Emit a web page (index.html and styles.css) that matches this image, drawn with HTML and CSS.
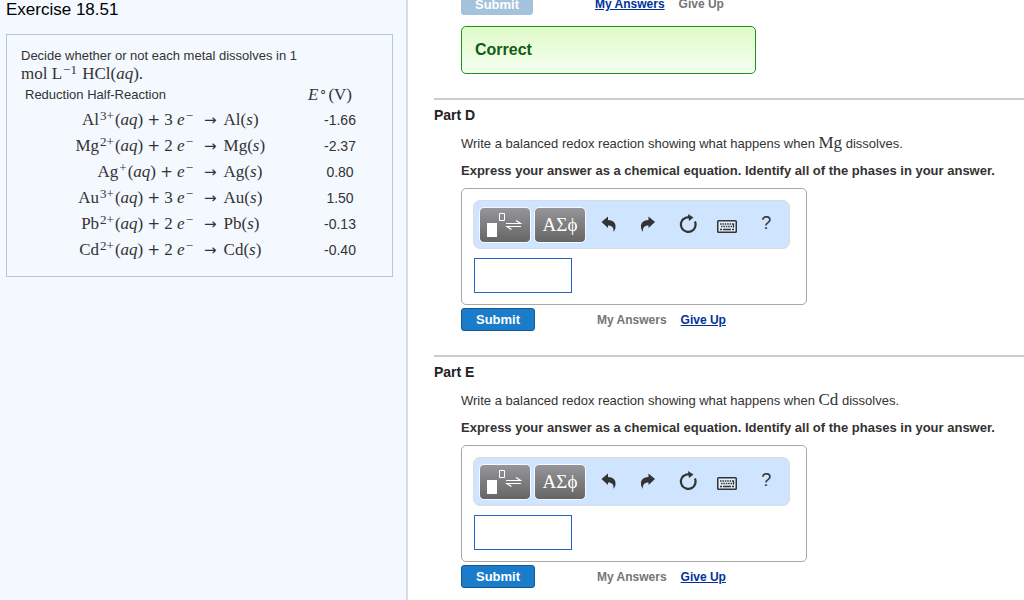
FILE: index.html
```html
<!DOCTYPE html>
<html lang="en">
<head>
    <meta charset="UTF-8">
    <meta name="viewport" content="width=device-width, initial-scale=1.0">
    <title>Exercise 18.51</title>
    <link rel="stylesheet" href="styles.css">
</head>
<body>
    <!-- shared toolbar icons -->
    <svg class="sprite" aria-hidden="true">
        <symbol id="icon-template" viewBox="0 0 50 34">
            <path d="M7 15h10v14H7z" fill="#fff"/>
            <path d="M19.500 5.500h5v7h-5z" fill="none" stroke="#fff"/>
            <path d="M26 15.500h14.500l-4.500-3M41 18.500H27l4.500 3" fill="none" stroke="#fff" stroke-width="1.200"/>
        </symbol>
        <symbol id="icon-undo" viewBox="0 0 16 16">
            <path d="M0.500 6L7 0.500V4c5 0 8 3 7.500 7 0 2-1 3.500-2 5 0.500-4-1-6.500-5.500-6.500V12z"/>
        </symbol>
        <symbol id="icon-redo" viewBox="0 0 16 16">
            <path d="M15 6L8.500 0.500V4c-5 0-8 3-7.500 7 0 2 1 3.500 2 5-0.500-4 1-6.500 5.500-6.500V12z"/>
        </symbol>
        <symbol id="icon-reset" viewBox="0 0 20 20">
            <path d="M5.500 4.800A7.400 7.400 0 1 0 17 7.500" fill="none" stroke="#333" stroke-width="2.200"/>
            <path d="M5 5.500C7 3.500 9 3.200 11 3.200" fill="none" stroke="#333" stroke-width="2.200"/>
            <path d="M10 0l5.500 3.500L11 7z"/>
        </symbol>
        <symbol id="icon-keyboard" viewBox="0 0 20 13">
            <rect x="0.750" y="0.750" width="18.500" height="11.500" rx="0.800" fill="#e4f0ff" stroke="#333" stroke-width="1.500"/>
            <path d="M3 4h14M4 6.500h13" fill="none" stroke="#333" stroke-width="1.400" stroke-dasharray="1.500 0.900"/>
            <path d="M3 9.500h2M6 9.500h8M15 9.500h2M16.500 3.500v4" fill="none" stroke="#333" stroke-width="1.300"/>
        </symbol>
    </svg>

    <div class="page">
        <aside class="sidebar">
            <h1>Exercise 18.51</h1>
            <section class="problem">
                <p>Decide whether or not each metal dissolves in 1<br>
                <span class="math">mol L<sup>−1</sup> HCl(<i>aq</i>).</span></p>
                <table>
                    <thead>
                        <tr>
                            <th colspan="2" scope="col">Reduction Half-Reaction</th>
                            <th class="potential math" scope="col"><i>E</i><sup>∘</sup>(V)</th>
                        </tr>
                    </thead>
                    <tbody>
                        <tr>
                            <td class="ion math">Al<sup>3+</sup>(<i>aq</i>) <span class="op">+</span> 3 <i>e</i><sup>−</sup></td>
                            <td class="metal math"><span class="arrow">→</span>Al(<i>s</i>)</td>
                            <td class="value">-1.66</td>
                        </tr>
                        <tr>
                            <td class="ion math">Mg<sup>2+</sup>(<i>aq</i>) <span class="op">+</span> 2 <i>e</i><sup>−</sup></td>
                            <td class="metal math"><span class="arrow">→</span>Mg(<i>s</i>)</td>
                            <td class="value">-2.37</td>
                        </tr>
                        <tr>
                            <td class="ion math">Ag<sup>+</sup>(<i>aq</i>) <span class="op">+</span> <i>e</i><sup>−</sup></td>
                            <td class="metal math"><span class="arrow">→</span>Ag(<i>s</i>)</td>
                            <td class="value">0.80</td>
                        </tr>
                        <tr>
                            <td class="ion math">Au<sup>3+</sup>(<i>aq</i>) <span class="op">+</span> 3 <i>e</i><sup>−</sup></td>
                            <td class="metal math"><span class="arrow">→</span>Au(<i>s</i>)</td>
                            <td class="value">1.50</td>
                        </tr>
                        <tr>
                            <td class="ion math">Pb<sup>2+</sup>(<i>aq</i>) <span class="op">+</span> 2 <i>e</i><sup>−</sup></td>
                            <td class="metal math"><span class="arrow">→</span>Pb(<i>s</i>)</td>
                            <td class="value">-0.13</td>
                        </tr>
                        <tr>
                            <td class="ion math">Cd<sup>2+</sup>(<i>aq</i>) <span class="op">+</span> 2 <i>e</i><sup>−</sup></td>
                            <td class="metal math"><span class="arrow">→</span>Cd(<i>s</i>)</td>
                            <td class="value">-0.40</td>
                        </tr>
                    </tbody>
                </table>
            </section>
        </aside>

        <main>
            <section class="part part-done">
                <div class="actions">
                    <button class="submit" type="button" disabled>Submit</button>
                    <a href="#answers">My Answers</a>
                    <span>Give Up</span>
                </div>
                <div class="feedback">Correct</div>
            </section>

            <section class="part">
                <h2>Part D</h2>
                <div class="part-body">
                    <p>Write a balanced redox reaction showing what happens when <span class="math">Mg</span> dissolves.</p>
                    <p class="instructions">Express your answer as a chemical equation. Identify all of the phases in your answer.</p>
                    <div class="editor">
                        <div class="toolbar">
                            <button class="tool-dark" type="button" aria-label="Templates"><svg width="50" height="34"><use href="#icon-template"/></svg></button>
                            <button class="tool-dark" type="button">ΑΣϕ</button>
                            <button class="tool" type="button" aria-label="Undo"><svg width="16" height="16"><use href="#icon-undo"/></svg></button>
                            <button class="tool" type="button" aria-label="Redo"><svg width="16" height="16"><use href="#icon-redo"/></svg></button>
                            <button class="tool" type="button" aria-label="Reset"><svg width="20" height="20"><use href="#icon-reset"/></svg></button>
                            <button class="tool tool-keyboard" type="button" aria-label="Keyboard"><svg width="20" height="13"><use href="#icon-keyboard"/></svg></button>
                            <button class="tool" type="button">?</button>
                        </div>
                        <input type="text" aria-label="Part D answer">
                    </div>
                    <div class="actions">
                        <button class="submit" type="button">Submit</button>
                        <span>My Answers</span>
                        <a href="#giveup">Give Up</a>
                    </div>
                </div>
            </section>

            <section class="part">
                <h2>Part E</h2>
                <div class="part-body">
                    <p>Write a balanced redox reaction showing what happens when <span class="math">Cd</span> dissolves.</p>
                    <p class="instructions">Express your answer as a chemical equation. Identify all of the phases in your answer.</p>
                    <div class="editor">
                        <div class="toolbar">
                            <button class="tool-dark" type="button" aria-label="Templates"><svg width="50" height="34"><use href="#icon-template"/></svg></button>
                            <button class="tool-dark" type="button">ΑΣϕ</button>
                            <button class="tool" type="button" aria-label="Undo"><svg width="16" height="16"><use href="#icon-undo"/></svg></button>
                            <button class="tool" type="button" aria-label="Redo"><svg width="16" height="16"><use href="#icon-redo"/></svg></button>
                            <button class="tool" type="button" aria-label="Reset"><svg width="20" height="20"><use href="#icon-reset"/></svg></button>
                            <button class="tool tool-keyboard" type="button" aria-label="Keyboard"><svg width="20" height="13"><use href="#icon-keyboard"/></svg></button>
                            <button class="tool" type="button">?</button>
                        </div>
                        <input type="text" aria-label="Part E answer">
                    </div>
                    <div class="actions">
                        <button class="submit" type="button">Submit</button>
                        <span>My Answers</span>
                        <a href="#giveup">Give Up</a>
                    </div>
                </div>
            </section>
        </main>
    </div>
</body>
</html>
```
FILE: styles.css
```css
*,
*::after,
*::before{
    box-sizing: border-box;
}

body{
    margin: 0;
    font-family: "Liberation Sans", Arial, sans-serif;
    font-size: 13px;
    line-height: 18px;
    color: #333;
    background-color: #fff;
}

h1, h2, p{
    margin: 0;
}

button, input{
    font-family: inherit;
}

.sprite{
    display: none;
}

.page{
    display: flex;
    min-height: 100vh;
}

/* left column */
.sidebar{
    flex: 0 0 408px;
    padding: 0 13px 0 6px;
    border-right: 2px solid #d3e0ea;
    background-color: #f4f8ff;
}
.sidebar h1{
    font-size: 17px;
    line-height: 20px;
    font-weight: normal;
    color: #000;
}

.problem{
    margin-top: 14px;
    padding: 12px 14px 13px;
    border: 1px solid #b0c8da;
}

.math{
    font-family: "Liberation Serif", "Times New Roman", serif;
    font-size: 17px;
    line-height: 18px;
}
.math sup{
    margin: 0 1px;
    font-size: 13px;
    line-height: 0;
    vertical-align: 5px;
}
.op,
.arrow{
    font-family: "DejaVu Sans", sans-serif;
    font-size: 15px;
    line-height: 0;
}
.arrow{
    margin-right: 7px;
}

table{
    width: 100%;
    border-collapse: collapse;
}
th, td{
    height: 26px;
    padding: 0;
    white-space: nowrap;
}
th{
    height: 23px;
    padding: 0 0 2px 4px;
    font-weight: normal;
    text-align: left;
}
.potential{
    padding: 0 26px 2px 0;
    text-align: right;
}
.ion{
    width: 173px;
    text-align: right;
}
.metal{
    width: 80px;
    padding-left: 10px;
}
.value{
    padding-left: 28px;
    font-size: 14px;
    text-align: center;
}

/* right column */
main{
    flex: 1;
    min-width: 0;
    padding-left: 26px;
    overflow: hidden;
}

.part{
    padding: 5px 0 24px;
    border-top: 2px solid #ccc;
}
.part h2{
    font-size: 14px;
    line-height: 20px;
    color: #222;
}
.part-done{
    margin-top: -7px;
    padding: 0 0 24px 27px;
    border-top: 0;
}
.part-body{
    padding: 2px 0 0 27px;
}
.part-body p{
    margin-top: 7px;
    line-height: 20px;
}
.part-body .instructions{
    font-weight: bold;
}

.feedback{
    max-width: 295px;
    margin-top: 11px;
    padding: 14px 13px;
    border: 1px solid #1a931a;
    border-radius: 5px;
    font-size: 16px;
    font-weight: bold;
    color: #145c14;
    background: linear-gradient(#dffbc8, #f4fef0);
}

.editor{
    max-width: 346px;
    margin: 7px 0 3px;
    padding: 11px 16px 11px 11px;
    border: 1px solid #a8a8a8;
    border-radius: 5px;
}
.toolbar{
    display: flex;
    align-items: center;
    height: 49px;
    padding: 0 3px 0 5px;
    border: 1px solid #dadde0;
    border-radius: 7px;
    background-color: #cfe5ff;
}
.tool-dark{
    width: 52px;
    height: 36px;
    margin-right: 3px;
    padding: 0;
    border: 1px solid #f5f9ff;
    border-radius: 5px;
    font-family: "Liberation Serif", "DejaVu Serif", serif;
    font-size: 19px;
    color: #fff;
    background: linear-gradient(#96969a, #656565);
}
.tool-dark svg{
    display: block;
}
.tool{
    display: flex;
    flex: 1;
    align-items: center;
    justify-content: center;
    height: 34px;
    padding: 0 0 2px;
    border: 0;
    font-size: 18px;
    color: #333;
    fill: #333;
    background: none;
}
.tool-keyboard{
    padding: 3px 0 0;
}

.editor input{
    display: block;
    width: 98px;
    height: 35px;
    margin: 9px 0 0 1px;
    padding: 0 6px;
    border: 1px solid #2860c4;
    font-size: 16px;
}

.actions{
    display: flex;
    align-items: center;
    font-size: 12px;
    font-weight: bold;
    color: #757575;
}
.submit{
    width: 74px;
    height: 23px;
    margin-right: 62px;
    padding: 0;
    border: 1px solid #145a92;
    border-radius: 3px;
    font-size: 13px;
    font-weight: bold;
    color: #fff;
    background-color: #1b7ccb;
}
.submit:disabled{
    width: 72px;
    height: 22px;
    border-color: #a3c2dc;
    color: #fff;
    background-color: #a3c2dc;
}
.actions a,
.actions span{
    margin-right: 14px;
}
.actions a{
    color: #003399;
}
```
